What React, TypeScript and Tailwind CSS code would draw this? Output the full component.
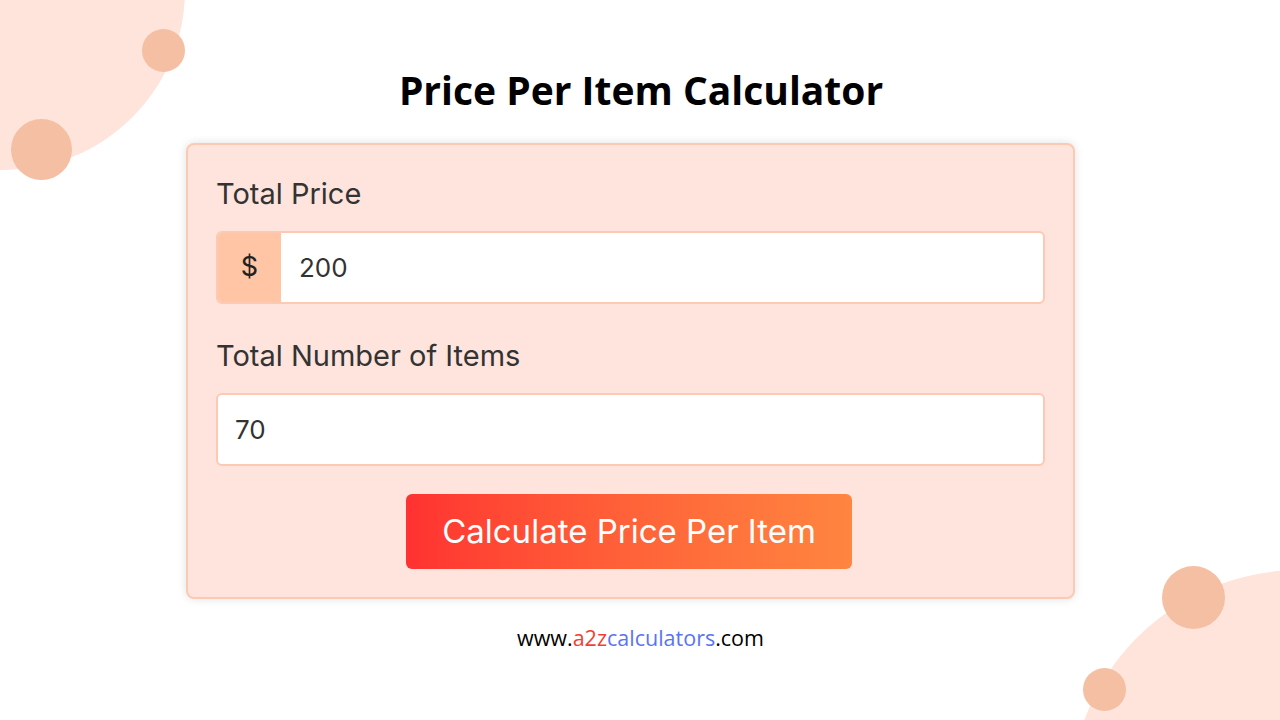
import React from "react";

function Decorations() {
    return (
        <div className="pointer-events-none absolute inset-0">
            <div className="absolute left-[-175px] top-[-190px] h-[360px] w-[360px] rounded-full bg-[#fee4da]" />
            <div className="absolute left-[142px] top-[29px] h-[43px] w-[43px] rounded-full bg-[#f4bfa3]" />
            <div className="absolute left-[11px] top-[119px] h-[61px] w-[61px] rounded-full bg-[#f4bfa3]" />
            <div className="absolute left-[1070px] top-[570px] h-[460px] w-[460px] rounded-full bg-[#fee4da]" />
            <div className="absolute left-[1162px] top-[566px] h-[63px] w-[63px] rounded-full bg-[#f4bfa3]" />
            <div className="absolute left-[1083px] top-[668px] h-[43px] w-[43px] rounded-full bg-[#f4bfa3]" />
        </div>
    );
}

export default function App() {
    return (
        <div className="relative h-[720px] w-[1280px] overflow-hidden bg-white" style={{ fontFamily: "Inter, 'Liberation Sans', sans-serif" }}>
            <Decorations />

            <div className="relative flex flex-col">
                <h1 className="mt-[64px] h-[52px] text-center text-[39px] font-bold leading-[52px] text-black pl-[2px]" style={{ fontFamily: "'Open Sans', sans-serif" }}>
                    Price Per Item Calculator
                </h1>

                <div className="ml-[186px] mt-[27px] w-[889px] rounded-lg border-2 border-[#fcc9b2] bg-[#fee4dc] px-[28px] pt-[31px] pb-[28px] shadow-[0_0_10px_rgba(0,0,0,0.12)]">
                    <label className="block h-[35px] text-[29px] leading-[35px] text-[#333]">Total Price</label>
                    <div className="mt-[20px] flex h-[73px] overflow-hidden rounded-md border-2 border-[#fcc9b2] bg-white">
                        <div className="flex w-[63px] items-center justify-center bg-[#ffc5a5] text-[27px] text-[#222]">$</div>
                        <div className="flex items-center pl-[18px] text-[26px] text-[#333]">200</div>
                    </div>

                    <label className="mt-[34px] block h-[35px] text-[29px] leading-[35px] text-[#333]">Total Number of Items</label>
                    <div className="mt-[20px] flex h-[73px] items-center rounded-md border-2 border-[#fcc9b2] bg-white pl-[17px] text-[26px] text-[#333]">
                        70
                    </div>

                    <div className="mt-[28px] flex justify-center pr-[3px]">
                        <button className="h-[75px] w-[446px] rounded-md bg-gradient-to-r from-[#ff3131] to-[#ff8540] text-[33px] text-white">
                            Calculate Price Per Item
                        </button>
                    </div>
                </div>

                <p className="mt-[23px] pl-[1px] text-center text-[21.5px] text-black" style={{ fontFamily: "'Open Sans', sans-serif" }}>
                    www.<span className="text-[#f53d33]">a2z</span>
                    <span className="text-[#5a73f6]">calculators</span>.com
                </p>
            </div>
        </div>
    );
}
